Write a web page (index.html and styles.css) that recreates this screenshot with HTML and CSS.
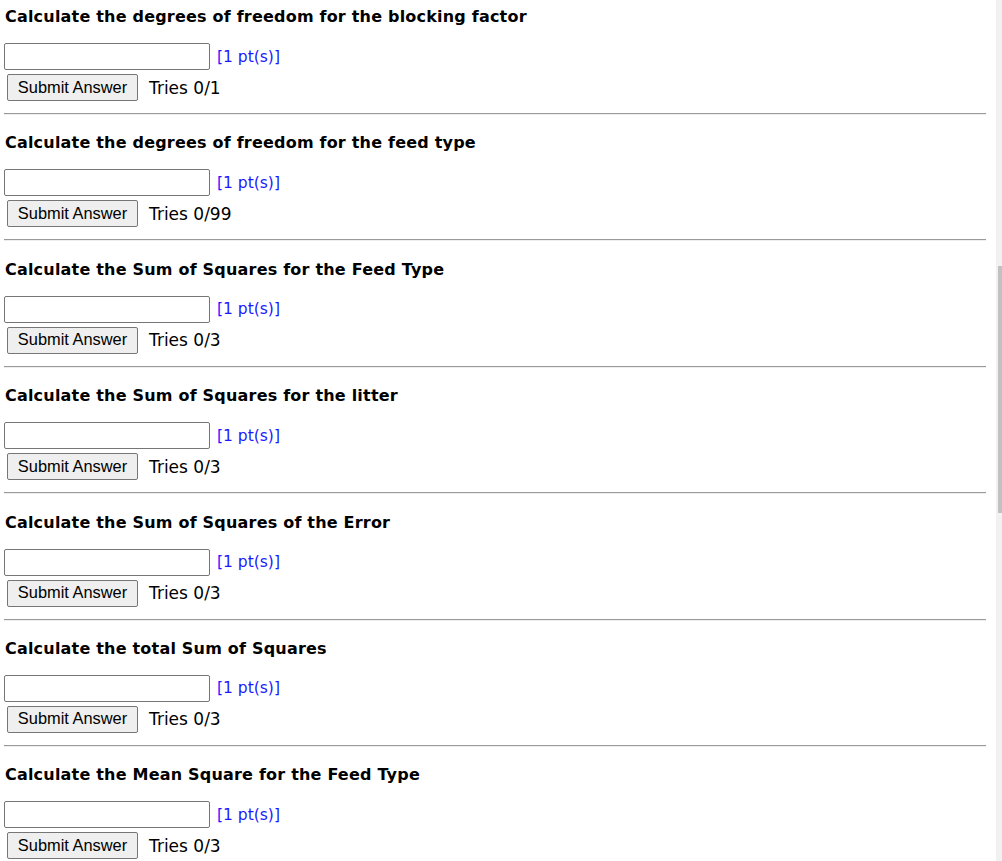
FILE: index.html
```html
<!DOCTYPE html>
<html>
<head>
<meta charset="utf-8">
<link rel="stylesheet" href="styles.css">
</head>
<body>
<div class="page">
  <div class="q">
    <h3 class="q-title">Calculate the degrees of freedom for the blocking factor</h3>
    <div class="answer-row"><input class="answer" type="text"><span class="pts">[1 pt(s)]</span></div>
    <div class="submit-row"><button class="submit">Submit Answer</button><span class="tries">Tries 0/1</span></div>
  </div>
  <hr class="sep">
  <div class="q">
    <h3 class="q-title">Calculate the degrees of freedom for the feed type</h3>
    <div class="answer-row"><input class="answer" type="text"><span class="pts">[1 pt(s)]</span></div>
    <div class="submit-row"><button class="submit">Submit Answer</button><span class="tries">Tries 0/99</span></div>
  </div>
  <hr class="sep">
  <div class="q">
    <h3 class="q-title">Calculate the Sum of Squares for the Feed Type</h3>
    <div class="answer-row"><input class="answer" type="text"><span class="pts">[1 pt(s)]</span></div>
    <div class="submit-row"><button class="submit">Submit Answer</button><span class="tries">Tries 0/3</span></div>
  </div>
  <hr class="sep">
  <div class="q">
    <h3 class="q-title">Calculate the Sum of Squares for the litter</h3>
    <div class="answer-row"><input class="answer" type="text"><span class="pts">[1 pt(s)]</span></div>
    <div class="submit-row"><button class="submit">Submit Answer</button><span class="tries">Tries 0/3</span></div>
  </div>
  <hr class="sep">
  <div class="q">
    <h3 class="q-title">Calculate the Sum of Squares of the Error</h3>
    <div class="answer-row"><input class="answer" type="text"><span class="pts">[1 pt(s)]</span></div>
    <div class="submit-row"><button class="submit">Submit Answer</button><span class="tries">Tries 0/3</span></div>
  </div>
  <hr class="sep">
  <div class="q">
    <h3 class="q-title">Calculate the total Sum of Squares</h3>
    <div class="answer-row"><input class="answer" type="text"><span class="pts">[1 pt(s)]</span></div>
    <div class="submit-row"><button class="submit">Submit Answer</button><span class="tries">Tries 0/3</span></div>
  </div>
  <hr class="sep">
  <div class="q">
    <h3 class="q-title">Calculate the Mean Square for the Feed Type</h3>
    <div class="answer-row"><input class="answer" type="text"><span class="pts">[1 pt(s)]</span></div>
    <div class="submit-row"><button class="submit">Submit Answer</button><span class="tries">Tries 0/3</span></div>
  </div>
</div>
<div class="scrollbar"><div class="thumb"></div></div>
</body>
</html>
```

FILE: styles.css
```css
html, body {
  margin: 0;
  padding: 0;
  background: #fff;
  overflow: hidden;
  height: 100%;
}
.page {
  width: 982px;
  padding: 0 0 0 4px;
  font-family: "DejaVu Sans", Verdana, sans-serif;
  color: #000;
}
.q {
  display: flex;
  flex-direction: column;
}
.q-title {
  margin: 0;
  padding-left: 1px;
  font-size: 16px;
  letter-spacing: 0.2px;
  font-weight: bold;
  line-height: 18px;
  height: 18px;
  margin-top: 8px;
}
.answer-row {
  display: flex;
  align-items: center;
  margin-top: 17px;
}
.answer {
  box-sizing: border-box;
  width: 206px;
  height: 27px;
  margin: 0;
  border: 1px solid #767676;
  border-radius: 2px;
  background: #fff;
}
.pts {
  margin-left: 7px;
  color: #1a1aff;
  font-size: 15.5px;
}
.submit-row {
  display: flex;
  align-items: center;
  margin-top: 4px;
  padding-left: 3px;
}
.submit {
  box-sizing: border-box;
  width: 131px;
  height: 27px;
  margin: 0;
  padding: 0 0 1px 0;
  border: 1px solid #767676;
  border-radius: 2px;
  background: #efefef;
  font-family: "Liberation Sans", Arial, sans-serif;
  font-size: 16.4px;
  color: #000;
}
.tries {
  margin-left: 11px;
  font-size: 17px;
}
.sep {
  margin: 12px 0 11.4px 0;
  height: 0;
  border: 0;
  border-top: 1px solid #9a9a9a;
  border-bottom: 1px solid #eeeeee;
}
.scrollbar {
  position: fixed;
  top: 0;
  right: 0;
  width: 6px;
  height: 100%;
  background: #f1f1f1;
}
.thumb {
  position: absolute;
  top: 266px;
  left: 2px;
  width: 4px;
  height: 247px;
  background: #c1c1c1;
}
```
